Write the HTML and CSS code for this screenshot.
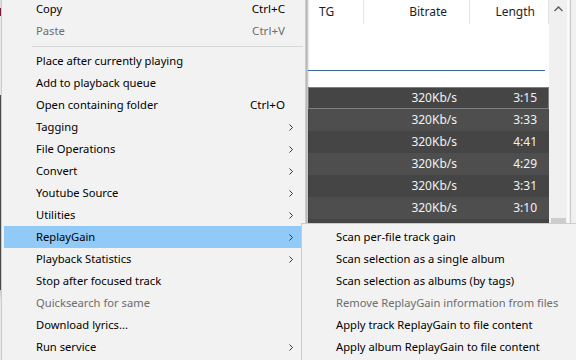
FILE: index.html
```html
<!DOCTYPE html>
<html>
<head>
<meta charset="utf-8">
<link rel="stylesheet" href="styles.css">
</head>
<body>
<div class="screen">
  <div class="app">
    <div class="edge"></div>
    <div class="under"></div>
    <div class="list">
      <div class="header">
        <div class="hc tg">TG</div>
        <div class="hc br">Bitrate</div>
        <div class="hc len">Length</div>
      </div>
      <div class="group"><div class="groupline"></div></div>
      <div class="rows">
        <div class="row odd focus"><span class="c tg"></span><span class="c br">320Kb/s</span><span class="c len">3:15</span></div>
        <div class="row even"><span class="c tg"></span><span class="c br">320Kb/s</span><span class="c len">3:33</span></div>
        <div class="row odd"><span class="c tg"></span><span class="c br">320Kb/s</span><span class="c len">4:41</span></div>
        <div class="row even"><span class="c tg"></span><span class="c br">320Kb/s</span><span class="c len">4:29</span></div>
        <div class="row odd"><span class="c tg"></span><span class="c br">320Kb/s</span><span class="c len">3:31</span></div>
        <div class="row even"><span class="c tg"></span><span class="c br">320Kb/s</span><span class="c len">3:10</span></div>
        <div class="row odd"><span class="c tg"></span><span class="c br">320Kb/s</span><span class="c len">3:26</span></div>
      </div>
    </div>
    <div class="vscroll">
      <div class="sbtn"><svg width="9" height="6" viewBox="0 0 9 6"><polyline points="0.5,5 4.5,1 8.5,5" fill="none" stroke="#606060" stroke-width="1.5"/></svg></div>
      <div class="thumb"></div>
    </div>
    <div class="frame"><div class="frameline"></div></div>
  </div>

  <div class="menu main">
    <div class="item"><span class="label">Copy</span><span class="key">Ctrl+C</span><span class="tail"></span></div>
    <div class="item disabled"><span class="label">Paste</span><span class="key">Ctrl+V</span><span class="tail"></span></div>
    <div class="sep"></div>
    <div class="item"><span class="label">Place after currently playing</span><span class="tail"></span></div>
    <div class="item"><span class="label">Add to playback queue</span><span class="tail"></span></div>
    <div class="item"><span class="label">Open containing folder</span><span class="key">Ctrl+O</span><span class="tail"></span></div>
    <div class="item"><span class="label">Tagging</span><span class="tail"><svg class="arr" width="4" height="7" viewBox="0 0 4 7"><polyline points="0.5,0.5 3.5,3.5 0.5,6.5" fill="none" stroke="#333" stroke-width="1"/></svg></span></div>
    <div class="item"><span class="label">File Operations</span><span class="tail"><svg class="arr" width="4" height="7" viewBox="0 0 4 7"><polyline points="0.5,0.5 3.5,3.5 0.5,6.5" fill="none" stroke="#333" stroke-width="1"/></svg></span></div>
    <div class="item"><span class="label">Convert</span><span class="tail"><svg class="arr" width="4" height="7" viewBox="0 0 4 7"><polyline points="0.5,0.5 3.5,3.5 0.5,6.5" fill="none" stroke="#333" stroke-width="1"/></svg></span></div>
    <div class="item"><span class="label">Youtube Source</span><span class="tail"><svg class="arr" width="4" height="7" viewBox="0 0 4 7"><polyline points="0.5,0.5 3.5,3.5 0.5,6.5" fill="none" stroke="#333" stroke-width="1"/></svg></span></div>
    <div class="item"><span class="label">Utilities</span><span class="tail"><svg class="arr" width="4" height="7" viewBox="0 0 4 7"><polyline points="0.5,0.5 3.5,3.5 0.5,6.5" fill="none" stroke="#333" stroke-width="1"/></svg></span></div>
    <div class="item active"><span class="label">ReplayGain</span><span class="tail"><svg class="arr" width="4" height="7" viewBox="0 0 4 7"><polyline points="0.5,0.5 3.5,3.5 0.5,6.5" fill="none" stroke="#333" stroke-width="1"/></svg></span></div>
    <div class="item"><span class="label">Playback Statistics</span><span class="tail"><svg class="arr" width="4" height="7" viewBox="0 0 4 7"><polyline points="0.5,0.5 3.5,3.5 0.5,6.5" fill="none" stroke="#333" stroke-width="1"/></svg></span></div>
    <div class="item"><span class="label">Stop after focused track</span><span class="tail"></span></div>
    <div class="item disabled"><span class="label">Quicksearch for same</span><span class="tail"></span></div>
    <div class="item"><span class="label">Download lyrics...</span><span class="tail"></span></div>
    <div class="item"><span class="label">Run service</span><span class="tail"><svg class="arr" width="4" height="7" viewBox="0 0 4 7"><polyline points="0.5,0.5 3.5,3.5 0.5,6.5" fill="none" stroke="#333" stroke-width="1"/></svg></span></div>
  </div>

  <div class="menu sub">
    <div class="item"><span class="label">Scan per-file track gain</span></div>
    <div class="item"><span class="label">Scan selection as a single album</span></div>
    <div class="item"><span class="label">Scan selection as albums (by tags)</span></div>
    <div class="item disabled"><span class="label">Remove ReplayGain information from files</span></div>
    <div class="item"><span class="label">Apply track ReplayGain to file content</span></div>
    <div class="item"><span class="label">Apply album ReplayGain to file content</span></div>
  </div>
</div>
</body>
</html>
```

FILE: styles.css
```css
* { box-sizing: border-box; }
html, body { margin: 0; padding: 0; }
body {
  width: 576px;
  height: 360px;
  overflow: hidden;
  font-family: "Noto Sans", "Open Sans", sans-serif;
  font-size: 11.2px;
  background: #f0f0f0;
}
.screen {
  position: relative;
  width: 576px;
  height: 360px;
  overflow: hidden;
}
.app {
  display: flex;
  height: 360px;
}
.edge {
  width: 1px;
  flex: 0 0 1px;
  background: linear-gradient(to bottom,
    #dcdcdc 0, #dcdcdc 8px, #7a1838 8px, #7a1838 16px,
    #e8e8e8 16px, #e8e8e8 95px, #4a4a4a 95px, #4a4a4a 290px,
    #c8c8c8 290px, #e8e8e8 300px);
}
.under {
  flex: 0 0 307px;
  background: #f0f0f0;
}
.list {
  flex: 0 0 241px;
  background: #fff;
  display: flex;
  flex-direction: column;
  overflow: hidden;
  font-size: 12px;
}
.header {
  display: grid;
  grid-template-columns: 56px 106px 79px;
  height: 24px;
  flex: 0 0 24px;
}
.hc {
  display: flex;
  align-items: center;
  color: #1e1e2a;
  border-right: 1px solid #e5e5e5;
  padding-bottom: 1px;
}
.hc.tg { padding-left: 11px; }
.hc.br { justify-content: flex-end; padding-right: 22px; }
.hc.len { justify-content: flex-end; padding-right: 13px; }
.group {
  flex: 0 0 63px;
  padding-top: 46px;
}
.groupline {
  height: 1px;
  margin-right: 4px;
  background: #3f6b9a;
}
.rows { display: flex; flex-direction: column; }
.row {
  display: grid;
  grid-template-columns: 56px 106px 78px;
  height: 22px;
  flex: 0 0 22px;
  align-items: center;
  color: #eef2f8;
  padding-bottom: 1px;
}
.row.odd { background: #454545; }
.row.even { background: #4e4e4e; }
.row.focus { box-shadow: inset 0 0 0 1px #808080; }
.c.br { text-align: right; padding-right: 13px; }
.c.len { text-align: right; padding-right: 11px; }
.vscroll {
  flex: 0 0 18px;
  background: #f0f0f0;
  display: flex;
  flex-direction: column;
  align-items: center;
}
.sbtn {
  height: 18px;
  width: 18px;
  display: flex;
  align-items: center;
  justify-content: center;
}
.thumb {
  margin-top: 200px;
  width: 15px;
  height: 120px;
  background: #cdcdcd;
}
.frame {
  flex: 1 1 auto;
  background: #f0f0f0;
  border-left: 2px solid #fafafa;
  display: flex;
  padding-left: 1px;
}
.frameline {
  width: 1px;
  background: #c8c8c8;
}

.menu {
  position: absolute;
  background: #f2f2f2;
  border: 1px solid #cccccc;
  padding: 2px;
  color: #000;
  display: flex;
  flex-direction: column;
  box-shadow: 2px 2px 2px rgba(0,0,0,0.25);
}
.menu.main {
  left: 1px;
  top: -5px;
  width: 305px;
}
.menu.sub {
  left: 301px;
  top: 223px;
  width: 300px;
  height: 160px;
}
.item {
  display: flex;
  align-items: center;
  height: 22px;
  flex: 0 0 22px;
  padding-left: 32px;
  padding-bottom: 1px;
  white-space: nowrap;
}
.item .label { flex: 1 1 auto; }
.item .key { font-size: 11.6px; }
.item .tail {
  flex: 0 0 18px;
  width: 18px;
  display: flex;
  align-items: center;
  padding-left: 4px;
  padding-top: 1px;
}
.item.disabled { color: #6d6d6d; }
.item.active { background: #91c9f7; }
.sep {
  height: 8px;
  flex: 0 0 8px;
  margin-left: 28px;
  display: flex;
  align-items: center;
}
.sep::after {
  content: "";
  display: block;
  height: 1px;
  width: 100%;
  background: #d7d7d7;
}
```
